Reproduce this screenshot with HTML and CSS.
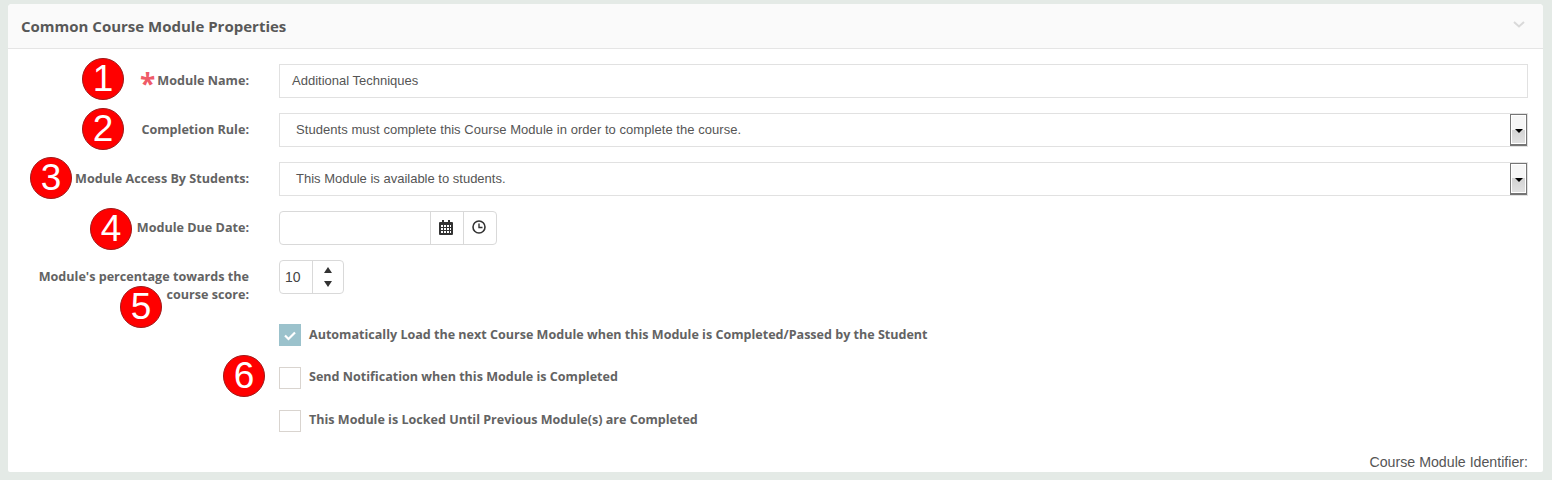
FILE: index.html
```html
<!DOCTYPE html>
<html lang="en">
<head>
<meta charset="utf-8">
<title>Common Course Module Properties</title>
<link rel="stylesheet" href="styles.css">
</head>
<body>
<section class="panel">
  <header class="panel-head">
    <h2>Common Course Module Properties</h2>
    <svg class="chev" width="12" height="7" viewBox="0 0 12 7"><path d="M1 1l5 4.5L11 1" fill="none" stroke="#d9d9d9" stroke-width="2"/></svg>
  </header>
  <div class="panel-body">
    <div class="row">
      <label class="lbl"><span class="req">*</span>Module Name:</label>
      <div class="field box text">Additional Techniques</div>
    </div>
    <div class="row">
      <label class="lbl">Completion Rule:</label>
      <div class="field box sel sel-wide">Students must complete this Course Module in order to complete the course.<span class="arrow"></span></div>
    </div>
    <div class="row">
      <label class="lbl">Module Access By Students:</label>
      <div class="field box sel">This Module is available to students.<span class="arrow"></span></div>
    </div>
    <div class="row">
      <label class="lbl">Module Due Date:</label>
      <div class="group date">
        <div class="date-input"></div>
        <div class="addon">
          <svg width="14" height="15" viewBox="0 0 14 15"><path d="M3 0h2v2h4V0h2v2h2a1 1 0 0 1 1 1v11a1 1 0 0 1-1 1H1a1 1 0 0 1-1-1V3a1 1 0 0 1 1-1h2z" fill="#333"/><path d="M2 5h2v2H2zM5 5h2v2H5zM8 5h2v2H8zM11 5h1v2h-1zM2 8h2v2H2zM5 8h2v2H5zM8 8h2v2H8zM11 8h1v2h-1zM2 11h2v2H2zM5 11h2v2H5zM8 11h2v2H8zM11 11h1v2h-1z" fill="#fff"/></svg>
        </div>
        <div class="addon addon-clock">
          <svg width="14" height="14" viewBox="0 0 14 14"><circle cx="7" cy="7" r="6" fill="none" stroke="#333" stroke-width="1.6"/><path d="M7 3.5V7.5H10.5" fill="none" stroke="#333" stroke-width="1.4"/></svg>
        </div>
      </div>
    </div>
    <div class="row row-pct">
      <label class="lbl">Module's percentage towards the course score:</label>
      <div class="group spin">
        <div class="spin-val">10</div>
        <div class="spin-btns">
          <svg width="8" height="6" viewBox="0 0 8 6"><path d="M4 0l4 6H0z" fill="#333"/></svg>
          <svg width="8" height="6" viewBox="0 0 8 6"><path d="M0 0h8L4 6z" fill="#333"/></svg>
        </div>
      </div>
    </div>
    <div class="checks">
      <div class="check"><span class="cb on"><svg width="14" height="11" viewBox="0 0 14 11"><path d="M2 5.5l3.5 3.5L12 2.5" fill="none" stroke="#fff" stroke-width="2.2"/></svg></span><span class="check-text">Automatically Load the next Course Module when this Module is Completed/Passed by the Student</span></div>
      <div class="check"><span class="cb"></span><span class="check-text">Send Notification when this Module is Completed</span></div>
      <div class="check"><span class="cb"></span><span class="check-text">This Module is Locked Until Previous Module(s) are Completed</span></div>
    </div>
    <div class="ident">Course Module Identifier:</div>
  </div>
  <span class="num n1">1</span>
  <span class="num n2">2</span>
  <span class="num n3">3</span>
  <span class="num n4">4</span>
  <span class="num n5">5</span>
  <span class="num n6">6</span>
</section>
</body>
</html>
```
FILE: styles.css
```css
* { box-sizing: border-box; }
html, body { height: 100%; }
body {
  margin: 0;
  height: 480px;
  overflow: hidden;
  padding: 4px 9px 8px 8px;
  background: #e4eae6;
  font-family: "Open Sans", sans-serif;
  color: #5c5c5c;
}
.panel {
  position: relative;
  height: 468px;
  background: #fff;
  border-radius: 4px 4px 2px 2px;
  overflow: hidden;
}
.panel-head {
  height: 45px;
  background: #fafafa;
  border-bottom: 1px solid #e5e5e5;
  display: flex;
  align-items: center;
  justify-content: space-between;
  padding: 0 18px 1px 13px;
}
.panel-head h2 {
  margin: 0;
  font-size: 15px;
  font-weight: 700;
  color: #585858;
}
.chev { margin-top: -3px; }
.panel-body { padding: 15px 15px 0 0; }
.row {
  display: flex;
  height: 34px;
  margin-bottom: 15px;
  align-items: center;
}
.lbl {
  width: 241px;
  flex: none;
  margin-right: 30px;
  padding-bottom: 1px;
  text-align: right;
  font-size: 12.6px;
  font-weight: 700;
  line-height: 18px;
  color: #636363;
}
.req {
  color: #ef5b68;
  font-size: 28px;
  line-height: 12px;
  vertical-align: -9px;
  margin-right: 2px;
}
.box {
  flex: 1;
  height: 34px;
  padding-bottom: 2px;
  border: 1px solid #e1e1e1;
  display: flex;
  align-items: center;
  font-family: "Liberation Sans", Arial, sans-serif;
  font-size: 13px;
  color: #555;
  position: relative;
}
.text { padding-left: 12px; }
.sel { padding-left: 16px; }
.sel-wide { letter-spacing: 0.05px; }
.arrow {
  position: absolute;
  right: 0;
  top: 0;
  width: 17px;
  height: 32px;
  border: 1px solid #757575;
  border-bottom-width: 2px;
  box-shadow: inset 0 0 0 1px #fff;
  background: linear-gradient(#f6f6f6 0 50%, #d2d2d2 50%, #e2e2e2);
}
.arrow::after {
  content: "";
  position: absolute;
  left: 3.5px;
  top: 14px;
  border: 4px solid transparent;
  border-top: 4px solid #000;
  border-bottom: 0;
}
.group {
  display: flex;
  height: 34px;
  border: 1px solid #d9d9d9;
  border-radius: 4px;
  background: #fff;
}
.date-input { width: 150px; }
.addon {
  width: 33px;
  border-left: 1px solid #d9d9d9;
  display: flex;
  align-items: center;
  justify-content: center;
  padding: 0 2px 1px 0;
}
.addon-clock { padding-bottom: 2px; }
.row-pct { align-items: flex-start; margin-bottom: 30px; }
.row-pct .lbl { margin-top: 8px; padding-bottom: 0; }
.spin-val {
  width: 32px;
  padding-left: 5px;
  font-family: "Liberation Sans", Arial, sans-serif;
  font-size: 14px;
  line-height: 32px;
  color: #444;
}
.spin-btns {
  width: 31px;
  border-left: 1px solid #d9d9d9;
  display: flex;
  flex-direction: column;
  align-items: center;
  justify-content: center;
  gap: 8px;
}
.checks { padding-left: 271px; }
.check {
  display: flex;
  align-items: center;
  height: 22px;
  margin-bottom: 21px;
  font-size: 12.56px;
  font-weight: 700;
  color: #636363;
}
.check-text { margin-top: -4px; }
.check:first-child .check-text { margin-top: -2px; }
.cb {
  width: 22px;
  height: 22px;
  flex: none;
  margin-right: 8px;
  border: 1px solid #d9d4cf;
  display: flex;
  align-items: center;
  justify-content: center;
}
.cb.on { background: #9bc2cc; border-color: #9bc2cc; }
.ident {
  text-align: right;
  padding-top: 1px;
  font-family: "Liberation Sans", Arial, sans-serif;
  font-size: 14.2px;
  line-height: 16px;
  color: #555;
}
.num {
  position: absolute;
  width: 42px;
  height: 42px;
  border-radius: 50%;
  background: #f00;
  border: 1px solid #a01818;
  color: #fff;
  font-family: "Liberation Sans", Arial, sans-serif;
  font-size: 37px;
  line-height: 40px;
  text-align: center;
}
.n1 { left: 74px; top: 54px; }
.n2 { left: 74px; top: 104px; }
.n3 { left: 22px; top: 153px; }
.n4 { left: 82px; top: 204px; }
.n5 { left: 112px; top: 282px; }
.n6 { left: 215px; top: 351px; }
```
